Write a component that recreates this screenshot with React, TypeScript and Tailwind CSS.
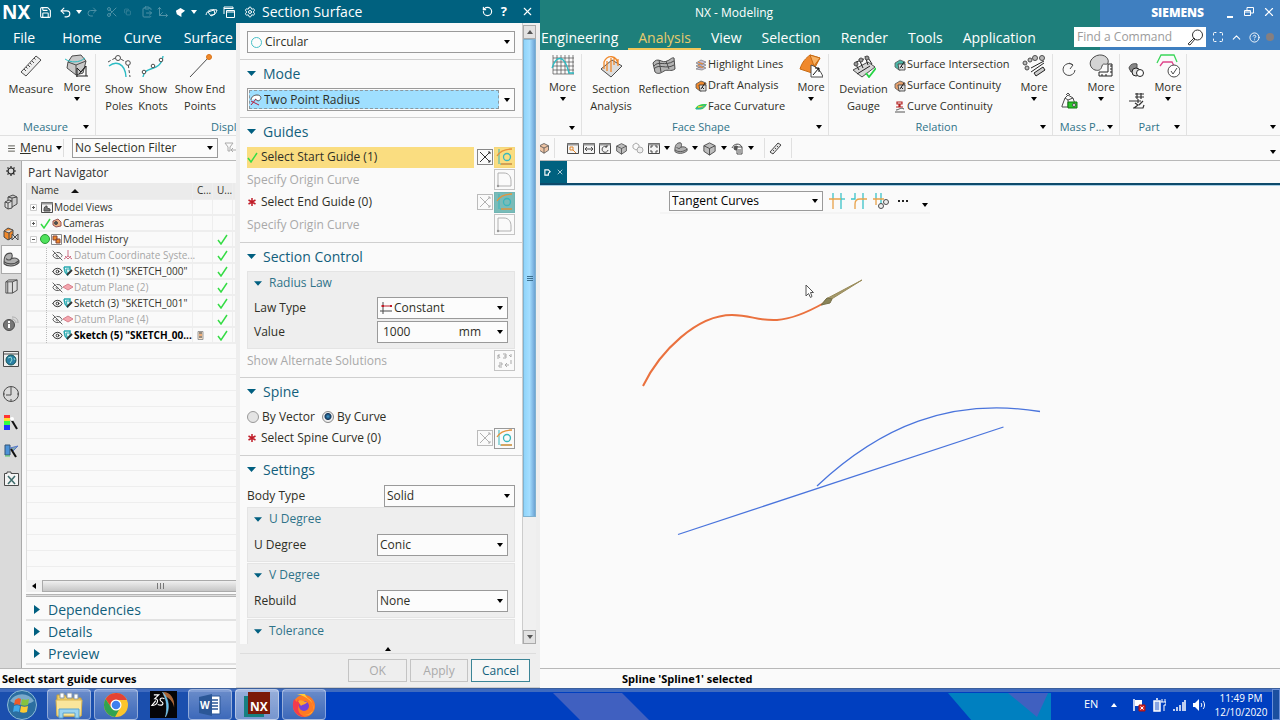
import type { ReactNode } from "react";
import {
  Copy,
  ClipboardPaste,
  ChevronUp,
  CircleHelp,
  EyeOff,
  Eye,
  Maximize,
  Menu,
  Move3d,
  Redo2,
  RotateCcw,
  Save,
  Scissors,
  Settings,
  Undo2,
  X,
} from "lucide-react";

function Glyph({ children, size = 24, box = 24 }: { children: ReactNode; size?: number; box?: number }) {
  return (
    <svg
      width={size}
      height={size}
      viewBox={`0 0 ${box} ${box}`}
      fill="none"
      stroke="#4b4b4b"
      strokeWidth="1"
      className="shrink-0"
      aria-hidden="true"
    >
      {children}
    </svg>
  );
}

function Caret({ className = "text-black" }: { className?: string }) {
  return (
    <svg width="6" height="4" viewBox="0 0 6 4" className={`shrink-0 ${className}`} aria-hidden="true">
      <path d="M0 0h6L3 4z" fill="currentColor" />
    </svg>
  );
}

const RulerIcon = ({ size = 24 }: { size?: number }) => (
  <Glyph size={size}>
    <path d="M2 18 17 2l5 4L7 22z" fill="#eee" />
    <path d="m5 15 2 2m0-4 1.500 1.500M9 11l2 2m0-4 1.500 1.500M13 7l2 2m0-5 1.500 1.500" />
  </Glyph>
);

const SmallRulerIcon = () => (
  <Glyph size={13} box={13}>
    <path d="M1 10 9 1l3 2-8 9z" fill="#e4e4e4" stroke="#444" />
    <path d="m4 8 1 1m1-3 1 1m1-3 1 1" />
  </Glyph>
);

const SolidIcon = () => (
  <Glyph>
    <path d="m3 8 4-6 9-1 5 6-3 12-7 2-9-7z" fill="#c9c9c9" />
    <path d="m3 8 8 3 10-4M11 11v10" />
    <path d="M0 5c6 4 14 4 20-1" stroke="#2cbcc4" />
    <path d="M11 22h12M12 23V14l4 4 5-6v10M14 20l7-8" stroke="#222" />
  </Glyph>
);

const PolesIcon = () => (
  <Glyph>
    <path d="M2 12C8 7 18 8 19 23" stroke="#2cbcc4" strokeWidth="1.400" />
    <path d="M1 8 10 3l11 6 2 14" strokeDasharray="3 2" />
    <circle cx="11" cy="4" r="2.500" fill="#fff" />
    <circle cx="21" cy="9" r="2.300" fill="#fff" />
  </Glyph>
);

const KnotsIcon = () => (
  <Glyph>
    <path d="M2 23c1-12 18-4 20-21" stroke="#2cbcc4" strokeWidth="1.400" />
    <circle cx="3" cy="18" r="1.800" fill="#fff" />
    <circle cx="12" cy="12" r="1.800" fill="#fff" />
    <circle cx="20" cy="6" r="1.800" fill="#fff" />
  </Glyph>
);

const EndPointIcon = () => (
  <Glyph>
    <path d="M2 23 21 3" />
    <circle cx="21" cy="3" r="2.500" fill="#f0892c" stroke="#d87418" />
  </Glyph>
);

const GraphIcon = () => (
  <Glyph>
    <path d="M2 1v19h21M6 1v19M10 1v19M14 1v19M18 1v19M22 1v19M2 4h21M2 8h21M2 12h21M2 16h21" strokeWidth=".7" />
    <path d="M1 14C5 2 13-1 18 19h5" stroke="#2cbcc4" strokeWidth="1.300" />
  </Glyph>
);

const SectionIcon = () => (
  <Glyph>
    <path d="m2 15 11-9 10 6-11 11z" fill="#ddd" />
    <path d="M5 15V8c3-7 13-8 14 3M8 17V7m4 11V4m3 7V3m4 9V5" stroke="#f0892c" strokeWidth="1.300" />
  </Glyph>
);

const ReflectionIcon = () => (
  <Glyph>
    <path d="M1 9c5-7 9 1 14-2 3-1 5-4 7-3l1 11c-4 3-7 0-11 2-4 3-7 3-9 1z" fill="#b4b4b4" />
    <path d="M2 12c5-6 10 1 20-5M2 15c5-6 12 1 20-4M7 6l2 12M14 7l3 8" />
  </Glyph>
);

const DraftBigIcon = () => (
  <Glyph>
    <path d="M1 15C3 8 7 4 11 1l10 3-8 15z" fill="#f0892c" stroke="#c66a12" />
    <path d="m11 1 10 3-6 8z" fill="#f7b163" stroke="#c66a12" />
    <path d="M12 11v12h12c-2-6-6-10-12-12z" fill="#fff" />
    <path d="m14 21 6-7m0 4v-4h-4" stroke="#111" />
  </Glyph>
);

const DeviationIcon = () => (
  <Glyph>
    <path d="M1 16 16 8l7 5-13 10z" fill="#d5d5d5" />
    <path d="m3 9 4 7m0-11 4 9m2-12 3 9M4 8l8-3m3-3 5 8M5 20l13-8" stroke="#222" />
    <circle cx="4" cy="10" r="2" fill="#999" />
    <circle cx="9" cy="6" r="2" fill="#999" />
    <circle cx="15" cy="4" r="2" fill="#999" />
    <path d="m14 19 3 4 7-9" stroke="#24d644" strokeWidth="1.800" />
  </Glyph>
);

const RelationIcon = () => (
  <Glyph>
    <circle cx="3" cy="9" r="2" fill="#bbb" />
    <circle cx="8" cy="6" r="2" fill="#bbb" />
    <circle cx="13" cy="4" r="2.500" fill="#bbb" />
    <circle cx="20" cy="4" r="2.500" fill="#bbb" />
    <circle cx="5" cy="14" r="2" fill="#bbb" />
    <path d="m9 14 13-7M9 18 22 9M12 19l9-6 2 3-9 6z" fill="#ccc" stroke="#222" />
  </Glyph>
);

const MassIcon = () => (
  <Glyph>
    <path d="M5 3C12-2 21 3 19 9c-2 3-5-1-6 3s-3 5-7 4S-2 8 5 3z" fill="#d4d4d4" />
    <path d="M23 10v12H10v-4h9v-8zM21 12h2m-2 3h2m-2 3h2m-10 2v2m4-2v2" stroke="#222" />
  </Glyph>
);

const PartCheckIcon = () => (
  <Glyph>
    <path d="m1 9 4-8h13l3 7" stroke="#3bd65a" strokeWidth="1.300" />
    <path d="m4 12 3-4h9l2 4" stroke="#e0468c" strokeWidth="1.300" />
    <circle cx="18" cy="17" r="6" fill="#fff" />
    <path d="m15 17 2 3 4-6" />
  </Glyph>
);

// Small patch of surface used beside the stacked ribbon commands
function PatchIcon({ fill }: { fill: string }) {
  return (
    <Glyph size={12} box={12}>
      <path d="M1 4 6 1l5 2-1 7-5 1-4-3z" fill={fill} stroke="#555" strokeWidth=".8" />
      <path d="M4 5h7v6H5z" fill="#ddd" stroke="#333" strokeWidth=".8" />
      <path d="m6 9 4-6M7 7l2 2" stroke="#222" />
    </Glyph>
  );
}

const StripeIcon = () => (
  <Glyph size={12} box={12}>
    <path d="m1 4 5-3 5 2-5 3zm0 3 5-3 5 2-5 3zm0 3 5-3 5 2-4 2z" fill="#c9c1d8" stroke="#777" strokeWidth=".7" />
    <path d="m3 3 5 2M3 6l5 3" stroke="#f0892c" />
  </Glyph>
);

const LeafIcon = () => (
  <Glyph size={12} box={12}>
    <path d="M0 8c3-5 6-5 12-5-3 6-6 6-12 5z" fill="#3bcf52" stroke="none" />
    <path d="M3 6c3-1 4 1 6-1" stroke="#f4d03c" strokeWidth="1.500" />
    <path d="M1 8c4 0 6-1 9-4" stroke="#2b9fd0" />
  </Glyph>
);

const CurveContinuityIcon = () => (
  <Glyph size={12} box={12}>
    <path d="M3 1h5v2H3zm2 2v3H2m4-3v3h3" stroke="#b32020" strokeWidth="1.200" />
    <path d="M1 11h10M2 9c3 0 4-3 8-1" stroke="#555" />
  </Glyph>
);

const CubeIcon = ({ fill = "#bdbdbd", size = 14 }: { fill?: string; size?: number }) => (
  <Glyph size={size} box={16}>
    <path d="m2 5 6-3 6 3v6l-6 4-6-4z" fill={fill} />
    <path d="m2 5 6 3 6-3M8 8v7" />
  </Glyph>
);

const ShoeIcon = ({ size = 16 }: { size?: number }) => (
  <Glyph size={size} box={16}>
    <path d="M1 10c0-5 2-8 6-8 2 0 2 3 1 5 3-1 6 0 7 2v2c-4 4-11 4-14 1z" fill="#b0b0b0" />
    <path d="M1 10c3 3 10 3 14-1M3 7c1 2 4 2 5 0" />
  </Glyph>
);

function FrameIcon({ children }: { children: ReactNode }) {
  return (
    <Glyph size={12} box={12}>
      <path d="M.5 1.500h11v10H.5z" fill="#f4f4f4" />
      <path d="M.5 2.500h11" strokeWidth="2" stroke="#999" />
      {children}
    </Glyph>
  );
}

type ToolProps = { icon: ReactNode; lines: string[]; className: string };

function Tool({ icon, lines, className }: ToolProps) {
  return (
    <button type="button" className={`flex shrink-0 flex-col items-center leading-[17px] ${className}`}>
      <span className="flex h-[26px] items-start">{icon}</span>
      {lines.map((l) => (
        <span key={l} className="whitespace-nowrap">
          {l}
        </span>
      ))}
    </button>
  );
}

function MoreTool({ icon, className = "w-10" }: { icon: ReactNode; className?: string }) {
  return (
    <button type="button" className={`flex shrink-0 flex-col items-center leading-[17px] ${className}`}>
      <span className="flex h-6 items-start">{icon}</span>
      <span>More</span>
      <span className="pt-0.5">
        <Caret />
      </span>
    </button>
  );
}

type GroupProps = { label: string; className: string; children: ReactNode; arrow?: boolean };

function Group({ label, className, children, arrow = true }: GroupProps) {
  return (
    <section className={`flex shrink-0 flex-col overflow-hidden border-r border-[#e2e2e2] ${className}`}>
      <div className="flex h-[66px] items-start">{children}</div>
      <div className="flex h-4 items-center pr-1.5 text-[#2f7389]">
        <span className="flex-1 whitespace-nowrap text-center">{label}</span>
        {arrow && <Caret />}
      </div>
    </section>
  );
}

function ToolList({ items }: { items: { label: string; icon: ReactNode }[] }) {
  return (
    <div className="flex shrink-0 flex-col">
      {items.map((i) => (
        <button key={i.label} type="button" className="flex h-[21px] items-center gap-px whitespace-nowrap">
          {i.icon}
          {i.label}
        </button>
      ))}
    </div>
  );
}

const quickTools = [
  { label: "Save", icon: <Save size={13} />, cls: "w-[22px]" },
  { label: "Undo", icon: <Undo2 size={13} />, cls: "w-[18px]" },
  { label: "Undo list", icon: <Caret className="text-white" />, cls: "w-2.5" },
  { label: "Redo", icon: <Redo2 size={12} />, cls: "w-4 opacity-30" },
  { label: "Cut", icon: <Scissors size={12} />, cls: "w-6 opacity-30" },
  { label: "Copy", icon: <Copy size={12} />, cls: "w-[7px] mr-2 opacity-30" },
  { label: "Paste", icon: <ClipboardPaste size={12} />, cls: "w-4 opacity-30" },
  { label: "Move", icon: <Move3d size={12} />, cls: "w-4 opacity-30" },
  {
    label: "Brush",
    icon: (
      <Glyph size={11} box={12}>
        <path d="m1 4 5-3 5 3-4 3v4L2 8z" fill="#fff" stroke="none" />
      </Glyph>
    ),
    cls: "w-[18px]",
  },
  { label: "Brush list", icon: <Caret className="text-white" />, cls: "w-2.5" },
  {
    label: "Repeat",
    icon: (
      <Glyph size={13} box={13}>
        <path d="M1 9c1-5 5-6 11-5-1 4-3 5-6 5M3 6l3 4 4-2-1-4z" stroke="#fff" />
      </Glyph>
    ),
    cls: "w-6",
  },
  {
    label: "Window",
    icon: (
      <Glyph size={12} box={12}>
        <path d="M1 8V1h9v2M3.500 4.500h8v7h-8zM1 2.500h9M4 6h7" stroke="#fff" />
      </Glyph>
    ),
    cls: "w-3",
  },
];

const leftTabs = ["Home", "Curve", "Surface"];
const rightTabs = ["Engineering", "Analysis", "View", "Selection", "Render", "Tools", "Application"];

function Header() {
  return (
    <header className="bg-[linear-gradient(to_right,#00617f_540px,#1e7f7b_540px,#1e7f7b_calc(100%-180px),#3f7fc0_calc(100%-180px))] text-white">
      <div className="flex h-6 items-center">
        <div className="flex w-[540px] shrink-0 items-center pl-0.5">
          <span className="w-8 font-['Noto_Sans'] text-[19px] leading-6 font-bold">NX</span>
          {quickTools.map((t) => (
            <button
              key={t.label}
              type="button"
              aria-label={t.label}
              className={`flex h-5 shrink-0 items-center justify-center ${t.cls}`}
            >
              {t.icon}
            </button>
          ))}
        </div>
        <h1 className="flex-1 pt-0.5 pl-[155px] text-[12px]">NX - Modeling</h1>
        <span className="pt-0.5 pr-5 text-[12px] font-extrabold">SIEMENS</span>
        <div className="flex items-center gap-2 pr-1">
          <button type="button" aria-label="Minimize" className="flex h-3 w-3 items-end justify-center">
            <span className="h-0.5 w-1.5 bg-white" />
          </button>
          <button type="button" aria-label="Restore">
            <Glyph size={10} box={10}>
              <path d="M.5 3.500h6v5h-6zM3 3V.5h6.500V6H7M.5 5h6" stroke="#fff" />
            </Glyph>
          </button>
          <button type="button" aria-label="Close">
            <X size={14} />
          </button>
        </div>
      </div>
      <div className="flex h-[26px] items-center text-[14px]">
        <nav className="flex w-[531px] shrink-0 items-center pl-[13px]">
          <button type="button" className="pr-4">
            File
          </button>
          {leftTabs.map((t) => (
            <button key={t} type="button" className="px-[11px]">
              {t}
            </button>
          ))}
        </nav>
        <nav className="flex h-full flex-1 items-center">
          {rightTabs.map((t) => (
            <button
              key={t}
              type="button"
              className={
                t === "Analysis"
                  ? "h-full border-b-2 border-[#f3c75a] px-2.5 pt-0.5 text-[#e8cb6c]"
                  : "h-full px-2.5"
              }
            >
              {t}
            </button>
          ))}
        </nav>
        <label className="flex h-5 w-[132px] items-center bg-white pr-0.5 text-gray-700">
          <input
            aria-label="Find a Command"
            placeholder="Find a Command"
            className="min-w-0 flex-1 pl-[3px] text-[12px] outline-none placeholder:text-[#9b9b9b]"
          />
          <Glyph size={17} box={17}>
            <circle cx="10.500" cy="6" r="5" stroke="#333" />
            <path d="m7 9 1 1-5 6-2-1z" stroke="#333" />
          </Glyph>
        </label>
        <div className="flex items-center gap-1.5 px-1.5">
          <button type="button" aria-label="Full screen">
            <Maximize size={12} />
          </button>
          <button type="button" aria-label="Collapse ribbon">
            <ChevronUp size={13} />
          </button>
          <button type="button" aria-label="Help">
            <CircleHelp size={11} />
          </button>
          <span className="h-2 w-2 rounded-full bg-[#857f80]" />
        </div>
      </div>
    </header>
  );
}

function Ribbon() {
  return (
    <div className="flex h-[86px] border-b border-[#e0e0e0] bg-[#fafafa] pt-1 text-[11px] text-[#2f2f26]">
      <div className="flex w-[540px] shrink-0">
        <Group label="Measure" className="w-24 pl-2">
          <Tool className="w-[46px]" icon={<RulerIcon />} lines={["Measure"]} />
          <MoreTool className="w-[46px]" icon={<SolidIcon />} />
        </Group>
        <Group label="Display" className="w-[268px] pl-1.5" arrow={false}>
          <Tool className="w-[34px]" icon={<PolesIcon />} lines={["Show", "Poles"]} />
          <Tool className="w-[34px]" icon={<KnotsIcon />} lines={["Show", "Knots"]} />
          <Tool className="w-[60px]" icon={<EndPointIcon />} lines={["Show End", "Points"]} />
        </Group>
      </div>
      <section className="flex w-[42px] shrink-0 flex-col items-center border-r border-[#e2e2e2] pl-1">
        <MoreTool className="h-[66px] w-10" icon={<GraphIcon />} />
        <div className="flex h-4 items-center self-end pr-1.5">
          <Caret />
        </div>
      </section>
      <Group label="Face Shape" className="w-[247px] pl-1">
        <Tool className="w-[50px]" icon={<SectionIcon />} lines={["Section", "Analysis"]} />
        <Tool className="w-[56px]" icon={<ReflectionIcon />} lines={["Reflection"]} />
        <div className="w-[103px] shrink-0 pl-[3px]">
          <ToolList
            items={[
              { label: "Highlight Lines", icon: <StripeIcon /> },
              { label: "Draft Analysis", icon: <PatchIcon fill="#f0892c" /> },
              { label: "Face Curvature", icon: <LeafIcon /> },
            ]}
          />
        </div>
        <MoreTool className="w-8" icon={<DraftBigIcon />} />
      </Group>
      <Group label="Relation" className="w-56 pl-1">
        <Tool className="w-[61px]" icon={<DeviationIcon />} lines={["Deviation", "Gauge"]} />
        <div className="w-[124px] shrink-0">
          <ToolList
            items={[
              { label: "Surface Intersection", icon: <PatchIcon fill="#4db8a8" /> },
              { label: "Surface Continuity", icon: <PatchIcon fill="#e6a06c" /> },
              { label: "Curve Continuity", icon: <CurveContinuityIcon /> },
            ]}
          />
        </div>
        <MoreTool className="w-8" icon={<RelationIcon />} />
      </Group>
      <Group label="Mass P..." className="w-[67px] pl-1">
        <div className="flex w-6 shrink-0 flex-col items-center gap-3.5 pt-2">
          <button type="button" aria-label="Update">
            <Glyph size={16} box={16}>
              <path d="M12 3a6 6 0 1 0 2 5M8 1l4 2-3 4" />
            </Glyph>
          </button>
          <button type="button" aria-label="Weight">
            <Glyph size={17} box={17}>
              <path d="M1 14 4 6l3-3 5 3 2 6v3H1zM4 6l3 2 5-2M7 8v7M5 3l2-2 2 2" />
              <path d="M7 10h9v6H7z" fill="#28c828" stroke="#117711" />
              <circle cx="13" cy="13" r="1.500" fill="#fff" />
            </Glyph>
          </button>
        </div>
        <MoreTool className="w-10" icon={<MassIcon />} />
      </Group>
      <Group label="Part" className="w-[67px] pl-1">
        <div className="flex w-6 shrink-0 flex-col items-center gap-3.5 pt-2">
          <button type="button" aria-label="Compare">
            <Glyph size={16} box={16}>
              <path d="M1 6c1-4 5-5 8-4v7l-6 1z" fill="#888" />
              <circle cx="8" cy="10" r="4" fill="#ddd" stroke="#222" />
              <circle cx="12" cy="11" r="3.500" fill="#fff" stroke="#222" />
            </Glyph>
          </button>
          <button type="button" aria-label="Examine">
            <Glyph size={17} box={17}>
              <path d="M7 2h9M9 1v6m4-6v6M7 5h9M1 9h12M10 7v4M5 16h10l1-3M7 11l3 2-4 3m5-3 4-4" stroke="#333" strokeWidth="1.200" />
            </Glyph>
          </button>
        </div>
        <MoreTool className="w-10" icon={<PartCheckIcon />} />
      </Group>
      <div className="flex flex-1 items-end justify-end pr-1 pb-1.5">
        <Caret />
      </div>
    </div>
  );
}

function SelectionBar() {
  const sep = <span className="h-5 w-px bg-[#e0e0e0]" />;
  return (
    <div className="flex h-[25px] items-center border-b border-[#b8b8b8] bg-[#fafafa] text-[#2f2f26]">
      <div className="flex w-[538px] shrink-0 items-center">
        <button type="button" className="flex w-16 items-center gap-1 border-r border-[#ddd] pl-[7px] text-[12px]">
          <Menu size={9} strokeWidth={2} />
          <span>
            <span className="underline">M</span>enu
          </span>
          <Caret />
        </button>
        <div className="ml-2 h-5 w-[146px]">
          <Dropdown label="Selection filter" value="No Selection Filter" height="h-5" />
        </div>
        <span className="ml-1.5">
          <Glyph size={12} box={12}>
            <path d="M1 1h8L6 5v4H4V5zM7 8h5M9 6 7 8l2 2" stroke="#aaa" />
          </Glyph>
        </span>
      </div>
      <div className="flex items-center gap-1">
        <CubeIcon fill="#eec4a4" size={12} />
        {sep}
        <span className="w-1" />
        <FrameIcon>
          <path d="M3 5h3v3H3zM6 8l3 3" stroke="#e08428" />
        </FrameIcon>
        <FrameIcon>
          <path d="M2 7h8M4 5 2 7l2 2m4-4 2 2-2 2" />
        </FrameIcon>
        <FrameIcon>
          <path d="M8 5a3 3 0 1 0 1 3M8 3v2H6" />
        </FrameIcon>
        <CubeIcon size={13} />
        <Glyph size={12} box={12}>
          <path d="m1 3 3-2 3 2v3L4 8 1 6z" stroke="#aaa" />
          <circle cx="8" cy="8" r="3" stroke="#aaa" fill="#eee" />
        </Glyph>
        <FrameIcon>
          <path d="M3 6V4h2m2 0h2v2m0 2v2H7m-2 0H3V8" />
        </FrameIcon>
        <Caret />
        <ShoeIcon size={14} />
        <Caret />
        <CubeIcon size={15} />
        <Caret />
        <Glyph size={13} box={13}>
          <path d="M1 6c2-5 8-5 10-1" />
          <circle cx="5" cy="6" r="2" fill="#555" />
          <path d="M6 5h5v7H6zM7 8h3m-3 2h3" fill="#fff" />
        </Glyph>
        <Caret />
        <span className="w-0.5" />
        {sep}
        <SmallRulerIcon />
        <span className="w-px" />
        {sep}
      </div>
      <div className="flex flex-1 justify-end pt-2 pr-1">
        <Caret />
      </div>
    </div>
  );
}

type DropdownProps = {
  label: string;
  value: string;
  id?: string;
  icon?: ReactNode;
  height?: string;
  highlighted?: boolean;
};

function Dropdown({ label, value, id, icon, height = "h-[22px]", highlighted = false }: DropdownProps) {
  return (
    <div className={`relative flex w-full items-center border border-[#9a9a9a] bg-[#fcfcfc] p-px ${height}`}>
      <div
        className={
          highlighted
            ? "mr-3.5 flex h-full flex-1 items-center gap-0.5 border border-dashed border-[#8a98a0] bg-[#9fdfff]"
            : "flex h-full flex-1 items-center gap-0.5 pl-px"
        }
      >
        {icon}
        <select
          id={id}
          aria-label={id ? undefined : label}
          defaultValue={value}
          className="h-full min-w-0 flex-1 appearance-none text-[12px] leading-4 outline-none"
        >
          <option>{value}</option>
        </select>
      </div>
      <span className="pointer-events-none absolute right-1 flex">
        <Caret />
      </span>
    </div>
  );
}

const railIcons: { label: string; icon: ReactNode; cls: string }[] = [
  {
    label: "Resource bar options",
    icon: (
      <Glyph size={10} box={10}>
        <circle cx="5" cy="5" r="3" stroke="#222" strokeWidth="1.200" />
        <path d="M5 0v2m0 6v2M0 5h2m6 0h2M1.500 1.500l1 1m5 5 1 1m0-7-1 1m-5 5-1 1" stroke="#222" strokeWidth="1.200" />
      </Glyph>
    ),
    cls: "h-5",
  },
  {
    label: "Assembly",
    icon: (
      <Glyph size={16} box={16}>
        <path d="m5 3 5-2 4 2v7l-5 3-4-2z" fill="#ccc" />
        <path d="m2 8 4-2 3 1v7l-4 1-3-2z" fill="#ddd" />
        <path d="m2 8 3 1 4-2M5 9v6M5 3l4 1 5-1M9 4v3" />
      </Glyph>
    ),
    cls: "h-[42px]",
  },
  {
    label: "Constraints",
    icon: (
      <Glyph size={16} box={16}>
        <path d="m1 5 4-3 5 2v7l-5 3-4-3z" fill="#f0892c" />
        <path d="m1 5 5 2 4-3M6 7v7M9 8l6 6V8l-6 6z" fill="#ddd" />
      </Glyph>
    ),
    cls: "h-[22px]",
  },
  {
    label: "Part navigator",
    icon: <ShoeIcon size={17} />,
    cls: "h-[29px] bg-[#fafafa] border border-[#aaa] border-r-0",
  },
  {
    label: "Reuse library",
    icon: (
      <Glyph size={15} box={16}>
        <path d="M2 3h7l5-2v11l-5 3H2zM2 3l3-2h9M9 3v12M4 3v12" fill="#ddd" />
      </Glyph>
    ),
    cls: "h-[25px]",
  },
  {
    label: "Information",
    icon: (
      <Glyph size={16} box={16}>
        <circle cx="6" cy="9" r="5.500" fill="#777" />
        <path d="M6 8v4M6 5v2" stroke="#fff" strokeWidth="2" />
        <path d="M9 1c4 0 6 2 6 6M9 3c2 0 4 2 4 4" stroke="#aaa" />
      </Glyph>
    ),
    cls: "h-[49px]",
  },
  {
    label: "Web browser",
    icon: (
      <Glyph size={16} box={16}>
        <path d="M.5.500h15v15H.5zM0 3h16" fill="#eee" />
        <circle cx="8" cy="9" r="5" fill="#2b7fa5" stroke="#155" />
        <path d="m5 7 3-1 1 3-2 3m4-5 1 2" stroke="#8fdcd4" />
      </Glyph>
    ),
    cls: "h-[22px]",
  },
  {
    label: "History",
    icon: (
      <Glyph size={16} box={16}>
        <circle cx="8" cy="8" r="7.500" />
        <path d="M8 1v8H3M8 13v2M1 8h1m12 0h1" />
      </Glyph>
    ),
    cls: "h-12",
  },
  {
    label: "Materials",
    icon: (
      <Glyph size={15} box={15}>
        <path d="M0 0h6v4H0z" fill="#f33" stroke="none" />
        <path d="M0 3h6v4H0z" fill="#fd3" stroke="none" />
        <path d="M0 6h6v5H0z" fill="#3f4" stroke="none" />
        <path d="M0 10h6v5H0z" fill="#23f" stroke="none" />
        <path d="m7 4 6 10" stroke="#111" strokeWidth="2" />
        <circle cx="8" cy="4" r="2" fill="#fff" stroke="none" />
      </Glyph>
    ),
    cls: "h-2",
  },
  {
    label: "Process studio",
    icon: (
      <Glyph size={15} box={15}>
        <path d="M1 2h5v10H1z" fill="#4c93d8" stroke="#357" />
        <path d="m6 5 8-2-5 5z" fill="#8aa" stroke="#57c" />
        <path d="m7 6 5 8" stroke="#111" strokeWidth="2" />
        <path d="M1 13h5" stroke="#5c6" />
      </Glyph>
    ),
    cls: "h-12",
  },
  {
    label: "Roles",
    icon: (
      <Glyph size={15} box={15}>
        <path d="M.5 2.500H3V1h4v1.500h7.500v12H.5z" fill="#f4f4f4" />
        <path d="m4 5 7 8m0-8-7 8" stroke="#3c6a6a" strokeWidth="1.500" />
      </Glyph>
    ),
    cls: "h-2",
  },
];

function ResourceRail() {
  return (
    <nav className="flex w-[22px] shrink-0 flex-col items-end border-r border-[#aaa] bg-[#dadada]">
      {railIcons.map((r) => (
        <button
          key={r.label}
          type="button"
          aria-label={r.label}
          className={`flex w-5 shrink-0 items-center justify-center ${r.cls}`}
        >
          {r.icon}
        </button>
      ))}
    </nav>
  );
}

const SketchIcon = () => (
  <Glyph size={10} box={10}>
    <path d="M1 1h6v3M1 1l1 5 3 3.500" stroke="#28a9b0" strokeWidth="1.500" />
    <path d="M3 3h4v4H4z" fill="#dff4f4" stroke="#28a9b0" />
    <path d="m4 9 5-5" stroke="#333" strokeWidth="1.800" />
  </Glyph>
);

const PlaneIcon = () => (
  <Glyph size={10} box={10}>
    <path d="m0 5 5-3 5 3-5 3z" fill="#f4a6ae" stroke="#d8808c" />
  </Glyph>
);

const AxesIcon = () => (
  <Glyph size={10} box={10}>
    <path d="M5 0v6L1 9m4-3 4 3M2 6l3 3 3-3" stroke="#cf6f85" />
  </Glyph>
);

const treeRows = [
  { label: "Datum Coordinate Syste...", hidden: true, icon: <AxesIcon /> },
  { label: 'Sketch (1) "SKETCH_000"', icon: <SketchIcon /> },
  { label: "Datum Plane (2)", hidden: true, icon: <PlaneIcon /> },
  { label: 'Sketch (3) "SKETCH_001"', icon: <SketchIcon /> },
  { label: "Datum Plane (4)", hidden: true, icon: <PlaneIcon /> },
  { label: 'Sketch (5) "SKETCH_00...', active: true, icon: <SketchIcon /> },
];

const GreenTick = () => (
  <Glyph size={11} box={11}>
    <path d="m1 6 3 4 6-9" stroke="#35dc45" strokeWidth="1.500" />
  </Glyph>
);

function TreeToggle({ open }: { open?: boolean }) {
  return (
    <Glyph size={7} box={7}>
      <path d="M.5.500h6v6h-6z" stroke="#ccc" fill="#fff" />
      <path d={open ? "M2 3.500h3" : "M2 3.500h3M3.500 2v3"} stroke="#555" />
    </Glyph>
  );
}

function PartNavigator() {
  const cell = "border-r border-b border-[#eee] p-0 h-4";
  return (
    <aside className="flex w-[214px] shrink-0 flex-col bg-[#fafafa] pl-1">
      <h2 className="h-[22px] pl-0.5 text-[12px] leading-6 text-[#333]">Part Navigator</h2>
      <div className="flex-1 border-l border-[#ddd] bg-[repeating-linear-gradient(to_bottom,transparent_0_15px,#eee_15px_16px)]">
        <table className="w-full table-fixed border-collapse text-left text-[10px] leading-[15px] text-[#33332a]">
          <thead className="bg-[#ebebeb]">
            <tr>
              <th className={`${cell} font-normal`}>
                <span className="flex items-center gap-3 pl-1">
                  Name
                  <svg width="8" height="4" viewBox="0 0 8 4" aria-hidden="true">
                    <path d="M0 4h8L4 0z" fill="#111" />
                  </svg>
                </span>
              </th>
              <th className={`${cell} w-5 pl-1 font-normal`}>C...</th>
              <th className={`${cell} w-5 pl-1 font-normal`}>U...</th>
              <th className={`${cell} w-[3px]`} aria-label="More" />
            </tr>
          </thead>
          <tbody>
            <tr>
              <td className={cell}>
                <span className="flex items-center gap-px pl-[3px]">
                  <TreeToggle />
                  <span className="w-0.5" />
                  <FrameIcon>
                    <path d="M3 9c0-3 1-4 3-4v2l3 1v2H3z" fill="#777" />
                  </FrameIcon>
                  Model Views
                </span>
              </td>
              <td className={cell} />
              <td className={cell} />
              <td className={cell} />
            </tr>
            <tr>
              <td className={cell}>
                <span className="flex items-center gap-px pl-[3px]">
                  <TreeToggle />
                  <span className="w-px" />
                  <GreenTick />
                  <Glyph size={10} box={10}>
                    <path d="M1 3 6 1l3 3v4L4 9 1 7z" fill="#efb489" stroke="#955" />
                    <circle cx="4" cy="5" r="1.500" fill="#555" />
                  </Glyph>
                  Cameras
                </span>
              </td>
              <td className={cell} />
              <td className={cell} />
              <td className={cell} />
            </tr>
            <tr>
              <td className={cell}>
                <span className="flex items-center gap-px pl-[3px]">
                  <TreeToggle open />
                  <span className="w-px" />
                  <span className="h-2.5 w-2.5 rounded-full border border-[#2a9a35] bg-[#4fe25c]" />
                  <Glyph size={11} box={11}>
                    <path d="M.5.500h10v10H.5z" stroke="#888" />
                    <path d="M2 2h4v4H2zm3 3h4v4H5z" fill="#f0892c" stroke="#843" />
                  </Glyph>
                  Model History
                </span>
              </td>
              <td className={cell} />
              <td className={cell}>
                <span className="flex justify-center">
                  <GreenTick />
                </span>
              </td>
              <td className={cell} />
            </tr>
            {treeRows.map((r) => (
              <tr key={r.label} className={r.hidden ? "text-[#a6a6a6]" : ""}>
                <td className={cell}>
                  <span className="ml-[19px] flex items-center border-l border-dotted border-[#bbb] pl-[5px] whitespace-nowrap">
                    {r.hidden ? (
                      <EyeOff size={11} color="#555" className="shrink-0" />
                    ) : (
                      <Eye size={11} color="#222" className="shrink-0" />
                    )}
                    {r.icon}
                    <span className={r.active ? "ml-px font-bold text-black" : "ml-px"}>{r.label}</span>
                  </span>
                </td>
                <td className={cell}>
                  {r.active && (
                    <span className="flex justify-center pr-1">
                      <Glyph size={9} box={9}>
                        <path d="M2 .500h5v8H2z" fill="#fbe3c8" stroke="#999" />
                        <path d="M3 2h3M3 6h3" stroke="#333" />
                        <path d="M3 4h3" stroke="#e0782c" />
                      </Glyph>
                    </span>
                  )}
                </td>
                <td className={cell}>
                  <span className="flex justify-center">
                    <GreenTick />
                  </span>
                </td>
                <td className={cell} />
              </tr>
            ))}
          </tbody>
        </table>
      </div>
      <div className="flex h-3 shrink-0 bg-[#f0f0f0]">
        <button type="button" aria-label="Scroll left" className="flex w-4 items-center justify-center">
          <span className="rotate-90">
            <Caret />
          </span>
        </button>
        <div className="flex flex-1 items-center gap-0.5 border border-r-0 border-[#aaa] bg-linear-to-b from-[#f0f0f0] to-[#c6c6c6] pl-[114px]">
          <span className="h-1.5 w-px bg-[#777]" />
          <span className="h-1.5 w-px bg-[#777]" />
          <span className="h-1.5 w-px bg-[#777]" />
        </div>
      </div>
      <div className="my-0.5 h-[3px] shrink-0 border-y border-[#b5b5b5] bg-[#ddd]" />
      {["Dependencies", "Details", "Preview"].map((s) => (
        <button
          key={s}
          type="button"
          className="flex h-[22px] shrink-0 items-center gap-2 border-b-2 border-[#e2e2e2] pl-2 text-[14px] text-[#125f7c]"
        >
          <svg width="6" height="9" viewBox="0 0 6 9" aria-hidden="true">
            <path d="M0 0v9l6-4.500z" fill="#005f80" />
          </svg>
          {s}
        </button>
      ))}
      <div className="h-[3px] shrink-0" />
    </aside>
  );
}

function Canvas() {
  return (
    <main className="flex min-w-0 flex-1 flex-col bg-[#fafafa]">
      <div className="flex h-6 shrink-0 border-b-2 border-[#0d4a6b]">
        <div className="flex w-[331px] items-center justify-end gap-[5px] bg-[#00617f] pr-[3px] text-[11px] text-white">
          <span>t</span>
          <button type="button" aria-label="Detach window">
            <Glyph size={7} box={8}>
              <path d="M1 1h4l2 2-2 2v2H1z" stroke="#fff" strokeWidth="1.300" />
            </Glyph>
          </button>
          <button type="button" aria-label="Close tab">
            <X size={8} />
          </button>
        </div>
      </div>
      <div className="relative flex-1 border-t border-[#a8cfe6]">
        <div className="ml-[433px] flex h-[26px] items-center pt-1">
          <div className="w-[154px]">
            <Dropdown label="Curve rule" value="Tangent Curves" height="h-5" />
          </div>
          <div className="flex items-center gap-1.5 pl-1.5">
            <button type="button" aria-label="Stop at intersection">
              <Glyph size={16} box={16}>
                <path d="M4 0v6M12 0v16" stroke="#3cc3c8" strokeWidth="1.300" />
                <path d="M0 6h12M4 6v10" stroke="#e9a24a" strokeWidth="1.300" />
                <path d="M12 6h4" stroke="#3cc3c8" strokeWidth="1.300" />
              </Glyph>
            </button>
            <button type="button" aria-label="Follow fillet">
              <Glyph size={16} box={16}>
                <path d="M4 0v6H0M12 0v16" stroke="#3cc3c8" strokeWidth="1.300" />
                <path d="M4 16v-5q0-5 5-5h7" stroke="#e9a24a" strokeWidth="1.300" />
              </Glyph>
            </button>
            <button type="button" aria-label="Chain within feature">
              <Glyph size={16} box={16}>
                <path d="M3 0v6M8 0v12" stroke="#3cc3c8" strokeWidth="1.300" />
                <path d="M0 6h11M3 6v6" stroke="#e9a24a" strokeWidth="1.300" />
                <circle cx="13" cy="9" r="2.500" fill="#eee" />
                <circle cx="8" cy="13" r="2.500" fill="#eee" />
              </Glyph>
            </button>
            <button type="button" aria-label="More options" className="flex gap-0.5 pl-[3px]">
              <span className="h-0.5 w-0.5 bg-[#222]" />
              <span className="h-0.5 w-0.5 bg-[#222]" />
              <span className="h-0.5 w-0.5 bg-[#222]" />
            </button>
            <button type="button" aria-label="Toolbar options" className="pt-2 pl-2">
              <Caret />
            </button>
          </div>
        </div>
        <svg className="pointer-events-none absolute inset-0 h-full w-full" aria-hidden="true">
          {/* model curves, drawn in canvas space */}
          <g transform="translate(-236 -186)" fill="none">
            <path d="M660 213h270" stroke="#eee" />
            <path
              d="M643 386C660 351 697 315 732 315C752 315 756 321 777 320C792 319 808 312 824 303"
              stroke="#ea713e"
              strokeWidth="2"
            />
            <path d="m862 280-40 25 4-6z" fill="#a39a6c" stroke="#9a8b5a" />
            <path d="m821 305 9-2 2-4-5-1z" fill="#8a8458" stroke="#77704a" />
            <path d="M678 534.500 1003.500 427" stroke="#4a74dc" strokeWidth="1.300" />
            <path d="M817 486C880 427 950 397 1040 411.500" stroke="#4a74dc" strokeWidth="1.300" />
            <path d="M806 285v11l2.500-2.500 2 4 1.500-1-1.500-4h3z" fill="#fff" stroke="#555" />
          </g>
        </svg>
      </div>
    </main>
  );
}

const CurvePickIcon = () => (
  <Glyph size={18} box={18}>
    <path d="M3 1v15M4 16h12" stroke="#39b7bd" />
    <path d="M1 8C4 3 8 1 16 1M5 16h11" stroke="#e6943c" strokeWidth="1.300" />
    <circle cx="11" cy="9" r="3.500" stroke="#39b7bd" strokeWidth="1.300" />
  </Glyph>
);

function ReverseButton({ muted }: { muted?: boolean }) {
  return (
    <button
      type="button"
      aria-label="Reverse direction"
      className={`flex h-4 w-4 items-center justify-center border bg-[#fafafa] ${muted ? "border-[#bbb]" : "border-[#888]"}`}
    >
      <Glyph size={12} box={12}>
        <path d="m1 1 10 10M1 11 11 1M9 1h2v2M9 11h2V9" stroke={muted ? "#b0b0b0" : "#333"} />
      </Glyph>
    </button>
  );
}

function Heading({ children }: { children: string }) {
  return (
    <h3 className="mb-0.5 flex h-[26px] items-center gap-[7px] text-[14px] text-[#125f7c]">
      <svg width="9" height="5" viewBox="0 0 9 5" aria-hidden="true">
        <path d="M0 0h9L4.500 5z" fill="#005f80" />
      </svg>
      {children}
    </h3>
  );
}

function SubHeading({ children }: { children: string }) {
  return (
    <h4 className="flex h-[22px] items-center gap-[7px] text-[12px] text-[#2f7389]">
      <svg width="8" height="5" viewBox="0 0 9 5" aria-hidden="true">
        <path d="M0 0h9L4.500 5z" fill="#005f80" />
      </svg>
      {children}
    </h4>
  );
}

type PickRowProps = { label: string; done?: boolean; tone: string };

function PickRow({ label, done = false, tone }: PickRowProps) {
  return (
    <div className="flex h-[22px] items-center">
      <div className={`flex h-[21px] flex-1 items-center ${done ? "bg-[#fadd80]" : ""}`}>
        <span className="flex w-3.5 items-center text-[#c01c28]">
          {done ? (
            <GreenTick />
          ) : (
            <Glyph size={10} box={10}>
              <path d="M5 1v8M1.500 3l7 4m0-4-7 4" stroke="#c01c28" strokeWidth="1.500" />
            </Glyph>
          )}
        </span>
        {label}
      </div>
      <span className="ml-[3px]">
        <ReverseButton muted={!done} />
      </span>
      <button
        type="button"
        aria-label={label}
        className={`ml-px flex h-[21px] w-[21px] items-center justify-center border ${tone}`}
      >
        <CurvePickIcon />
      </button>
    </div>
  );
}

function OriginRow() {
  return (
    <div className="flex h-[23px] items-center text-[#a9a9a9]">
      <span className="flex-1">Specify Origin Curve</span>
      <button
        type="button"
        disabled
        aria-label="Specify Origin Curve"
        className="flex h-[21px] w-[21px] items-center justify-center border border-[#c4c4c4]"
      >
        <Glyph size={17} box={17}>
          <path d="M2 15V2h6c5 0 7 4 7 8v5z" stroke="#b0b0b0" />
          <circle cx="2" cy="15" r="1.200" fill="#999" stroke="none" />
        </Glyph>
      </button>
    </div>
  );
}

type FieldRowProps = { label: string; id: string; children: ReactNode; height?: string };

function FieldRow({ label, id, children, height = "h-6" }: FieldRowProps) {
  return (
    <div className={`flex items-center justify-between ${height}`}>
      <label htmlFor={id}>{label}</label>
      <div className="w-[131px]">{children}</div>
    </div>
  );
}

const section = "border-b border-[#cfcfcf] px-[7px]";
const box = "border border-[#e4e4e4] bg-[#eeeeee] px-1.5";

function SectionSurfaceDialog() {
  return (
    <div
      role="dialog"
      aria-label="Section Surface"
      className="absolute top-0 bottom-8 left-[236px] flex w-[304px] flex-col border-b border-[#ccc] bg-[#eeeeee] text-[12px] text-[#2f2f26]"
    >
      <div className="flex h-[23px] shrink-0 items-center bg-[#00617f] pr-1.5 pl-2 text-white">
        <Settings size={12} />
        <h2 className="flex-1 pl-1.5 text-[14px]">Section Surface</h2>
        <div className="flex items-center gap-2">
          <button type="button" aria-label="Reset">
            <RotateCcw size={11} strokeWidth={2.5} />
          </button>
          <button type="button" aria-label="Help" className="text-[13px] font-bold">
            ?
          </button>
          <button type="button" aria-label="Close dialog" className="pl-1.5">
            <X size={13} />
          </button>
        </div>
      </div>
      <div className="flex min-h-0 flex-1 pr-1 pl-1">
        <div className="flex-1 overflow-hidden bg-[#fafafa]">
          <div className={`${section} pt-2 pb-1.5`}>
            <Dropdown
              label="Section type"
              value="Circular"
              icon={
                <Glyph size={13} box={13}>
                  <circle cx="6.500" cy="6.500" r="5" stroke="#46bfc6" />
                </Glyph>
              }
            />
          </div>
          <div className={`${section} pb-1.5`}>
            <Heading>Mode</Heading>
            <Dropdown
              label="Mode"
              value="Two Point Radius"
              highlighted
              height="h-[23px]"
              icon={
                <Glyph size={12} box={12}>
                  <path d="M1 6c0-3 3-5 6-5 5 0 5 5 1 6L5 5" fill="#fff" stroke="#555" />
                  <path d="m1 7 8 4M1 11l5-6" stroke="#b32040" />
                </Glyph>
              }
            />
          </div>
          <div className={`${section} pb-1.5`}>
            <Heading>Guides</Heading>
            <PickRow label="Select Start Guide (1)" done tone="border-[#f4d77c] bg-[#fadd80]" />
            <OriginRow />
            <PickRow label="Select End Guide (0)" tone="border-[#70b5b3] bg-[#79bbb8]" />
            <OriginRow />
          </div>
          <div className={`${section} pb-[5px]`}>
            <Heading>Section Control</Heading>
            <div className={box}>
              <SubHeading>Radius Law</SubHeading>
              <div className="h-0.5" />
              <FieldRow label="Law Type" id="law-type">
                <Dropdown
                  id="law-type"
                  label="Law Type"
                  value="Constant"
                  icon={
                    <Glyph size={12} box={12}>
                      <path d="M3 0v12M0 9h12" />
                      <path d="M3 4h8M1 4h2" stroke="#c01c28" />
                      <path d="M2 3h2v2H2zm8 0h2v2h-2z" fill="#c01c28" stroke="none" />
                    </Glyph>
                  }
                />
              </FieldRow>
              <FieldRow label="Value" id="law-value">
                <div className="flex h-[22px] items-center border border-[#9a9a9a] bg-[#fcfcfc] pr-1">
                  <input id="law-value" defaultValue="1000" className="min-w-0 flex-1 pl-[5px] outline-none" />
                  <span className="pr-4">mm</span>
                  <Caret />
                </div>
              </FieldRow>
              <div className="h-1" />
            </div>
            <div className="flex h-[23px] items-center text-[#a9a9a9]">
              <span className="flex-1">Show Alternate Solutions</span>
              <button
                type="button"
                disabled
                aria-label="Show Alternate Solutions"
                className="flex h-[21px] w-[21px] items-center justify-center border border-[#c4c4c4]"
              >
                <Glyph size={17} box={17}>
                  <path
                    d="M2 7V3h2M2 3l2 3M7 2h3v2H8m2 0v2H7M13 3l2 2v-3M15 8v4M3 11h3v2H3v2h3M9 13h4m-4 0 2-2m-2 2 2 2"
                    stroke="#aaa"
                  />
                </Glyph>
              </button>
            </div>
          </div>
          <div className={`${section} pb-1.5`}>
            <Heading>Spine</Heading>
            <div className="flex h-[21px] items-center">
              <label className="flex items-center gap-[3px]">
                <input
                  type="radio"
                  name="spine"
                  className="h-3 w-3 appearance-none rounded-full border border-[#999] bg-[#e4e4e4]"
                />
                By Vector
              </label>
              <label className="ml-[7px] flex items-center gap-[3px]">
                <input
                  type="radio"
                  name="spine"
                  defaultChecked
                  className="h-3 w-3 appearance-none rounded-full border border-[#888] bg-[radial-gradient(circle_at_50%_45%,#3f9ccf_0,#12355a_3px,#eee_4px)]"
                />
                By Curve
              </label>
            </div>
            <PickRow label="Select Spine Curve (0)" tone="border-[#999] bg-[#fafafa]" />
          </div>
          <div className="px-[7px]">
            <Heading>Settings</Heading>
            <FieldRow label="Body Type" id="body-type" height="h-[23px]">
              <Dropdown id="body-type" label="Body Type" value="Solid" />
            </FieldRow>
            <div className={`${box} mb-px h-[55px]`}>
              <SubHeading>U Degree</SubHeading>
              <div className="h-[3px]" />
              <FieldRow label="U Degree" id="u-degree">
                <Dropdown id="u-degree" label="U Degree" value="Conic" />
              </FieldRow>
            </div>
            <div className={`${box} mb-px h-[55px]`}>
              <SubHeading>V Degree</SubHeading>
              <div className="h-[3px]" />
              <FieldRow label="Rebuild" id="rebuild">
                <Dropdown id="rebuild" label="Rebuild" value="None" />
              </FieldRow>
            </div>
            <div className={box}>
              <SubHeading>Tolerance</SubHeading>
              <div className="h-9" />
            </div>
          </div>
        </div>
        <div className="flex w-[14px] shrink-0 flex-col border-l border-[#ccc] bg-[#f0f0f0] pt-0.5">
          <button
            type="button"
            aria-label="Scroll up"
            className="flex h-[14px] w-full items-center justify-center border border-[#aaa] bg-[#e2e2e2]"
          >
            <span className="rotate-180">
              <Caret className="text-[#555]" />
            </span>
          </button>
          <div className="flex flex-[477] flex-col items-center justify-center gap-px border border-[#7fb2d0] bg-linear-to-r from-[#8fd4fa] via-[#a4deff] to-[#6da3d4]">
            <span className="h-px w-1.5 bg-[#3c708f]" />
            <span className="h-px w-1.5 bg-[#3c708f]" />
            <span className="h-px w-1.5 bg-[#3c708f]" />
          </div>
          <div className="flex-[113]" />
          <button
            type="button"
            aria-label="Scroll down"
            className="flex h-[14px] w-full items-center justify-center border border-[#aaa] bg-[#e2e2e2]"
          >
            <Caret className="text-[#555]" />
          </button>
        </div>
      </div>
      <div className="mx-1 flex h-[43px] shrink-0 flex-col">
        <button
          type="button"
          aria-label="Show less"
          className="flex h-2.5 shrink-0 items-center justify-center border-b border-[#ddd]"
        >
          <span className="rotate-180">
            <Caret />
          </span>
        </button>
        <div className="flex justify-end gap-[3px] pt-[5px] pr-1.5">
          <button type="button" disabled className="h-[23px] w-[59px] border border-[#c4c4c4] text-[#aaa]">
            OK
          </button>
          <button type="button" disabled className="h-[23px] w-[58px] border border-[#c4c4c4] text-[#aaa]">
            Apply
          </button>
          <button type="button" className="h-[23px] w-[59px] border border-[#3c8597] bg-[#f7f7f7] text-[#125f7c]">
            Cancel
          </button>
        </div>
      </div>
    </div>
  );
}

const appButton =
  "flex h-full w-11 items-center justify-center rounded-sm border border-white/40 bg-linear-to-b from-white/35 to-white/15";

function Taskbar() {
  return (
    <footer className="relative flex h-8 shrink-0 items-center overflow-hidden border-t border-[#3b5f9c] bg-[#003fc0] text-white">
      <svg className="absolute inset-0 h-full w-full" aria-hidden="true">
        <path d="M0 0h325v32H0z" fill="#1b4fae" />
        <path d="M553 4h69l28 28h-69z" fill="#4060c0" />
        <path d="M948 4h103v28h-79z" fill="#0080c0" />
        <path d="M1008 4h40l-11 24z" fill="#4060c0" />
        <path d="M0 0h5000v3H0z" fill="#3f6bbf" />
      </svg>
      <div className="relative flex h-full flex-1 items-center gap-[3px] pl-1.5">
        <button type="button" aria-label="Start" className="mr-1.5">
          <Glyph size={32} box={32}>
            <circle cx="16" cy="16" r="14.500" fill="#2b6ea0" stroke="#8fbcd8" />
            <path d="M4 12a14 14 0 0 1 24 0c-8 5-16 5-24 0z" fill="#79aacb" stroke="none" />
            <path d="M9 11c3-2 4-2 6-1l-1 6c-2-1-4-1-6 0z" fill="#ee5a28" stroke="none" />
            <path d="M16 10c2 1 5 1 7 0l-1 6c-2 1-5 1-7 0z" fill="#84c340" stroke="none" />
            <path d="M8 17c2-1 4-1 6 0l-1 6c-2-1-4-1-6 0z" fill="#42a8e8" stroke="none" />
            <path d="M15 17c2 1 5 1 7 0l-1 6c-2 1-5 1-7 0z" fill="#fccb32" stroke="none" />
          </Glyph>
        </button>
        <button type="button" aria-label="File Explorer" className={appButton}>
          <Glyph size={28} box={28}>
            <path d="M2 4h8l2 3h14v18H2z" fill="#f0cd63" stroke="#c59f3a" />
            <path d="M5 2h4v5H5zm7 0h5v5h-5zm7 1h4v5h-4z" fill="#fff" stroke="#89a" />
            <path d="M1 9h26l-1 16H2z" fill="#fae69c" stroke="#d9b654" />
            <path d="M4 18h20v9h-4v-5H8v5H4z" fill="#9bd4f0" stroke="#5ba3cf" />
          </Glyph>
        </button>
        <button type="button" aria-label="Chrome" className={appButton}>
          <Glyph size={26} box={26}>
            <circle cx="13" cy="13" r="12" fill="#fbc52c" stroke="none" />
            <path d="M2.600 7A12 12 0 0 1 24 8H13a5 5 0 0 0-5 7z" fill="#e34334" stroke="none" />
            <path d="M2.600 7A12 12 0 0 0 12 25l5-9c-3 4-7 2-8.500 0z" fill="#31a350" stroke="none" />
            <circle cx="13" cy="13" r="5.500" fill="#fff" stroke="none" />
            <circle cx="13" cy="13" r="4.300" fill="#3f80ee" stroke="none" />
          </Glyph>
        </button>
        <button type="button" aria-label="Dassault Systemes" className="flex h-full w-11 items-center justify-center">
          <Glyph size={27} box={28}>
            <path d="M0 0h28v28H0z" fill="#050508" stroke="none" />
            <path d="M14 1c7 0 12 7 11 16-1-6-5-10-11-12z" fill="#a8653a" stroke="none" />
            <path d="M13 1c5 9 5 18 3 26 5-8 4-19-3-26z" fill="#5fc0f2" stroke="#9adcf8" strokeWidth=".5" />
            <path d="M4 4h5L5 8c5 0 3 7-3 7l4-5M15 8c-4-2-6 1-3 3s1 5-4 3" stroke="#fff" strokeWidth="1.200" />
          </Glyph>
        </button>
        <button type="button" aria-label="Word" className={appButton}>
          <Glyph size={24} box={24}>
            <path d="M12 3h10v18H12z" fill="#fff" stroke="#2b5797" />
            <path d="M14 7h6m-6 3h6m-6 3h6m-6 3h6" stroke="#2b5797" strokeWidth="1.500" />
            <path d="m1 4 13-3v22L1 20z" fill="#2b5797" stroke="none" />
            <text x="2" y="16" fontSize="10" fontWeight="bold" fill="#fff" stroke="none">
              W
            </text>
          </Glyph>
        </button>
        <button type="button" aria-label="NX" className={`${appButton} bg-white/30`}>
          <Glyph size={28} box={28}>
            <path d="M1 5h20v21H1z" fill="#178080" stroke="none" />
            <path d="M5 1h22v22H5z" fill="#7b1908" stroke="none" />
            <text x="7" y="20" fontSize="12" fontWeight="bold" fill="#fff" stroke="none">
              NX
            </text>
          </Glyph>
        </button>
        <button type="button" aria-label="Firefox" className={appButton}>
          <Glyph size={26} box={26}>
            <circle cx="13" cy="14" r="11" fill="#ff7a22" stroke="none" />
            <path d="M3 7c-4 11 3 18 11 18-6-2-9-8-5-13l-2-5-1 3z" fill="#f33c4e" stroke="none" />
            <path d="M14 2c1 5 7 4 8 12s-4 9-8 9c11-1 14-15-8-21z" fill="#ffcb35" stroke="none" />
            <circle cx="13" cy="14" r="5" fill="#7542d8" stroke="none" />
            <path d="M7 9c4-2 5 1 9 1-1 3-5 2-6 4z" fill="#ffa62b" stroke="none" />
          </Glyph>
        </button>
      </div>
      <div className="relative flex h-full items-center text-[11px]">
        <span className="w-[27px]">EN</span>
        <button type="button" aria-label="Show hidden icons" className="mr-[15px] rotate-180">
          <Caret className="text-white" />
        </button>
        <div className="flex items-center gap-1.5">
          <Glyph size={14} box={14}>
            <path d="M2 1v12" stroke="#fff" strokeWidth="1.500" />
            <path d="M3 2h7v6H3z" fill="#fff" stroke="none" />
            <path d="M7 7h6v6H7z" fill="#d62f2f" stroke="#a11" />
            <path d="m8.500 8.500 3 3m0-3-3 3" stroke="#fff" />
          </Glyph>
          <Glyph size={14} box={14}>
            <path d="M2 3h6v10H2zM4 1h2" fill="#fff8" stroke="#fff" strokeWidth="1.500" />
            <path d="M10 1v3m3-3v3M9 4h5v3h-2v6" stroke="#fff" />
          </Glyph>
          <Glyph size={14} box={14}>
            <path d="M2 13v-2m3 2V9m3 4V7m3 6V4m2 9V2" stroke="#fff" strokeWidth="1.500" />
          </Glyph>
          <Glyph size={14} box={14}>
            <path d="M1 5h2l4-4v12L3 9H1z" fill="#fff" stroke="none" />
            <path d="M9 5c1 1 1 3 0 4m2-6c2 2 2 6 0 8" stroke="#fff" />
          </Glyph>
        </div>
        <time className="ml-2 w-[54px] text-center text-[10px] leading-[14px] whitespace-nowrap">
          11:49 PM
          <br />
          12/10/2020
        </time>
        <button
          type="button"
          aria-label="Show desktop"
          className="ml-1 h-full w-2 border border-[#6a8fd8] bg-[#1b4fa0]"
        />
      </div>
    </footer>
  );
}

export default function App() {
  return (
    <div className="relative flex h-screen flex-col overflow-hidden bg-[#fafafa] font-['Open_Sans','Noto_Sans',sans-serif]">
      <Header />
      <Ribbon />
      <SelectionBar />
      <div className="flex min-h-0 flex-1">
        <ResourceRail />
        <PartNavigator />
        <Canvas />
      </div>
      <div className="flex h-5 shrink-0 items-center border-t border-[#b8b8b8] pt-px pl-0.5 text-[11px] font-bold text-black">
        <span className="w-[620px]">Select start guide curves</span>
        <span>Spline 'Spline1' selected</span>
      </div>
      <Taskbar />
      <SectionSurfaceDialog />
    </div>
  );
}
